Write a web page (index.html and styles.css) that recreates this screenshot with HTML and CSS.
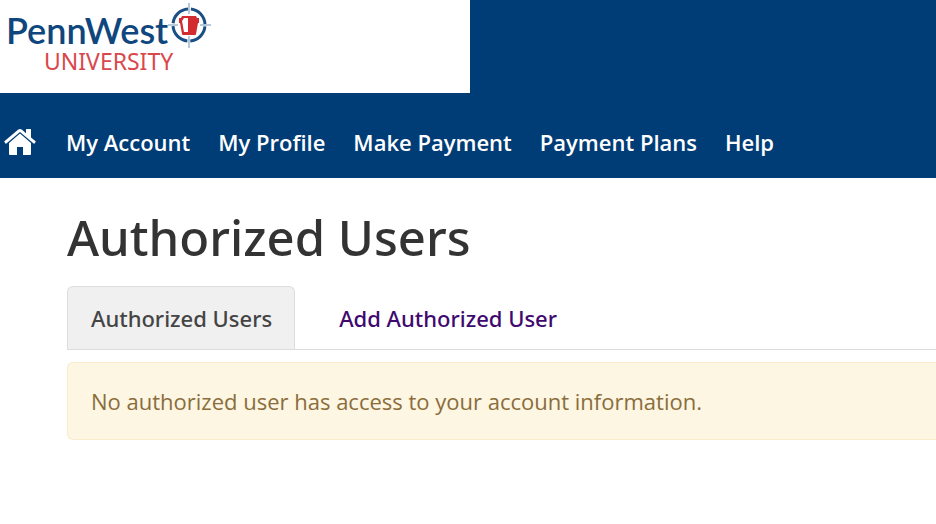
FILE: index.html
```html
<!DOCTYPE html>
<html lang="en">
<head>
    <meta charset="UTF-8">
    <meta name="viewport" content="width=device-width, initial-scale=1.0">
    <title>Authorized Users</title>
    <link rel="stylesheet" href="styles.css">
</head>
<body>
    <header class="header">
        <div class="brand">
            <div class="logo">
                <div class="logo-top">
                    <span class="logo-name">PennWest</span>
                    <svg class="logo-mark" width="44" height="46" viewBox="2 0 44 46" fill="none" aria-hidden="true">
                        <circle cx="23" cy="22" r="16" stroke="#1b4f84" stroke-width="3" stroke-dasharray="22.13 3" stroke-dashoffset="-1.5"/>
                        <path d="M23 0v11M23 33v12M2 22h10M34 22h11" stroke="#6f93b5" stroke-width="1"/>
                        <path d="M16 13h14l1 2h2v5h-1l-2 11q0 1-1 1H17q-1 0-1-1l-2-11h-1v-5h2z" fill="#d22c30"/>
                        <path d="M18 15h4v14h-4l-2-11z" fill="#fff"/>
                    </svg>
                </div>
                <span class="logo-sub">UNIVERSITY</span>
            </div>
        </div>
        <nav class="nav">
            <a href="#" class="home" aria-label="Home">
                <svg width="32" height="28" viewBox="0 0 32 28" fill="#fff" aria-hidden="true">
                    <path d="M16 5.5L5 15v11q0 1 1 1h7v-8h6v8h7q1 0 1-1V15z"/>
                    <path d="M31.6 13.3L27 9.4V1.5q0-.5-.5-.5h-4q-.5 0-.5.5v3.7L18 1.7q-2-1.5-4 0L.4 13.3q-.4.4 0 .8l1.1 1.3q.4.4.9.1L16 4l13.6 11.5q.5.3.9-.1l1.1-1.3q.4-.4 0-.8z"/>
                </svg>
            </a>
            <a href="#">My Account</a>
            <a href="#">My Profile</a>
            <a href="#">Make Payment</a>
            <a href="#">Payment Plans</a>
            <a href="#">Help</a>
        </nav>
    </header>
    <main class="content">
        <h1>Authorized Users</h1>
        <div class="tabs">
            <a href="#" class="tab active">Authorized Users</a>
            <a href="#" class="tab">Add Authorized User</a>
        </div>
        <div class="alert">No authorized user has access to your account information.</div>
    </main>
</body>
</html>
```
FILE: styles.css
```css
*
{
    box-sizing: border-box;
    margin: 0;
    padding: 0;
}
body
{
    font-family: "Segoe UI", "Noto Sans", sans-serif;
    font-size: 22px;
    line-height: 32px;
    color: #333;
    background-color: #fff;
    overflow-x: hidden;
}
a
{
    text-decoration: none;
}
.header
{
    background-color: #003c76;
}
.brand
{
    width: 470px;
    max-width: 100%;
    height: 93px;
    padding: 3px 6px;
    background-color: #fff;
}
.logo
{
    display: flex;
    flex-direction: column;
    width: 204px;
}
.logo-top
{
    display: flex;
    height: 46px;
}
.logo-name
{
    color: #0f467d;
    font-family: Lato, sans-serif;
    font-size: 36px;
    font-weight: 600;
    line-height: 54px;
}
.logo-mark
{
    flex-shrink: 0;
}
.logo-sub
{
    padding-left: 38px;
    color: #d9484b;
    font-size: 23px;
    line-height: 24px;
}
.nav
{
    display: flex;
    align-items: center;
    gap: 28px;
    height: 85px;
    padding: 12px 4px 0;
    font-family: "Segoe UI", "Open Sans", sans-serif;
}
.nav a
{
    color: #fff;
    font-weight: 600;
    white-space: nowrap;
}
.nav .home
{
    padding-right: 2px;
}
.home svg
{
    display: block;
}
.content
{
    padding: 27px 0 0 67px;
}
h1
{
    font-size: 49px;
    font-weight: 500;
    line-height: 64px;
    margin-bottom: 17px;
}
.tabs
{
    display: flex;
    gap: 20px;
    border-bottom: 1px solid #ddd;
}
.tab
{
    padding: 15px 22px 15px 23px;
    border: 1px solid transparent;
    border-bottom: none;
    border-radius: 6px 6px 0 0;
    color: #40096f;
    font-weight: 500;
}
.tab.active
{
    background-color: #f0f0f0;
    border-color: #ddd;
    color: #444;
}
.alert
{
    margin-top: 12px;
    padding: 22px 23px;
    border: 1px solid #faebcc;
    border-right: none;
    border-radius: 6px 0 0 6px;
    background-color: #fdf6e3;
    color: #8a6d3b;
    font-family: "Segoe UI", "Open Sans", sans-serif;
}
```
